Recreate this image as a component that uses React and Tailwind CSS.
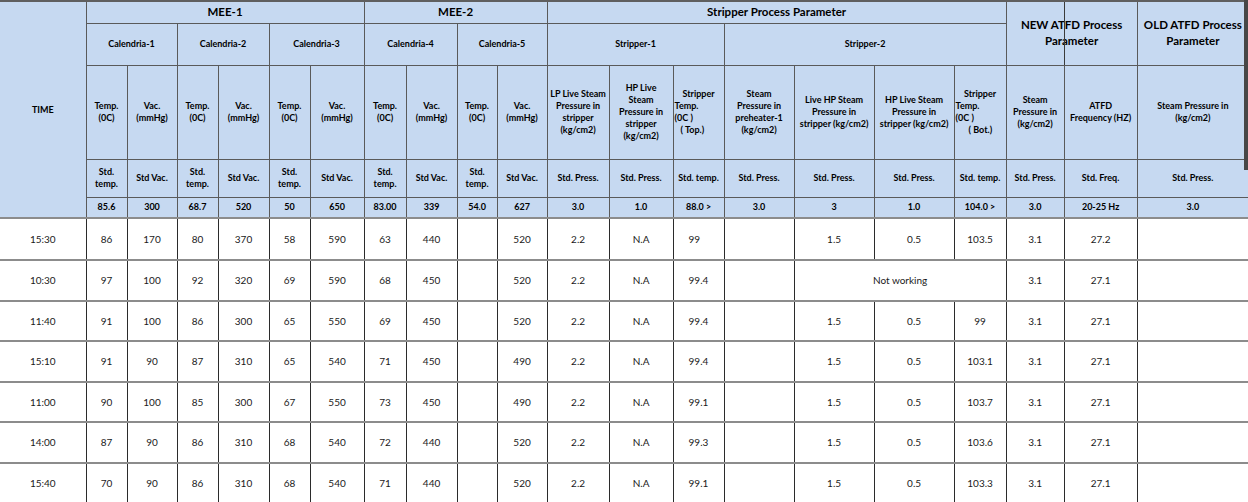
import React from "react";

const H = "bg-[#c6d9f1] border border-[#5a5a5a] text-center align-middle font-bold p-0 text-black";
const H1 = H + " text-[11.5px] leading-[16px] border-t-2 border-t-[#5f5f5f]";
const H2 = H + " text-[9px] leading-[12px]";
const D = "border-x border-x-[#2b2b2b] border-t-2 border-t-[#8c8c8c] text-center align-middle p-0 text-[10px] text-[#1a1a1a] font-normal";

const rows = [
  ["15:30", "86", "170", "80", "370", "58", "590", "63", "440", "", "520", "2.2", "N.A", "99", "", "1.5", "0.5", "103.5", "3.1", "27.2", ""],
  ["10:30", "97", "100", "92", "320", "69", "590", "68", "450", "", "520", "2.2", "N.A", "99.4", "", "NW", "3.1", "27.1", ""],
  ["11:40", "91", "100", "86", "300", "65", "550", "69", "450", "", "520", "2.2", "N.A", "99.4", "", "1.5", "0.5", "99", "3.1", "27.1", ""],
  ["15:10", "91", "90", "87", "310", "65", "540", "71", "450", "", "490", "2.2", "N.A", "99.4", "", "1.5", "0.5", "103.1", "3.1", "27.1", ""],
  ["11:00", "90", "100", "85", "300", "67", "550", "73", "450", "", "490", "2.2", "N.A", "99.1", "", "1.5", "0.5", "103.7", "3.1", "27.1", ""],
  ["14:00", "87", "90", "86", "310", "68", "540", "72", "440", "", "520", "2.2", "N.A", "99.3", "", "1.5", "0.5", "103.6", "3.1", "27.1", ""],
  ["15:40", "70", "90", "86", "310", "68", "540", "71", "440", "", "520", "2.2", "N.A", "99.1", "", "1.5", "0.5", "103.3", "3.1", "27.1", ""],
];

const rowH = ["h-[42px]", "h-[41px]", "h-[40px]", "h-[41px]", "h-[40px]", "h-[41px]", "h-[40px]"];

function TempHead({ label, pad }) {
  return (
    <div className="flex flex-col items-stretch">
      <div className="text-center">Stripper</div>
      <div className="text-left pl-[1px]">Temp.</div>
      <div className="text-left pl-[1px]">(0C )</div>
      <div className={"text-left " + pad}>({label})</div>
    </div>
  );
}

export default function App() {
  return (
    <div className="relative w-[1248px] h-[502px] overflow-hidden bg-white font-['Lato','Liberation_Sans',sans-serif]">
      <table className="w-[1248px] table-fixed border-collapse">
        <colgroup>
          <col className="w-[86px]" />
          <col className="w-[41px]" />
          <col className="w-[50px]" />
          <col className="w-[41px]" />
          <col className="w-[51px]" />
          <col className="w-[41px]" />
          <col className="w-[54px]" />
          <col className="w-[42px]" />
          <col className="w-[51px]" />
          <col className="w-[40px]" />
          <col className="w-[50px]" />
          <col className="w-[62px]" />
          <col className="w-[64px]" />
          <col className="w-[51px]" />
          <col className="w-[70px]" />
          <col className="w-[80px]" />
          <col className="w-[80px]" />
          <col className="w-[52px]" />
          <col className="w-[58px]" />
          <col className="w-[73px]" />
          <col className="w-[111px]" />
        </colgroup>
        <thead>
          <tr className="h-[22px]">
            <th rowSpan={5} className={H2 + " border-l-0 border-t-2 border-t-[#5f5f5f]"}>TIME</th>
            <th colSpan={6} className={H1}>MEE-1</th>
            <th colSpan={4} className={H1}>MEE-2</th>
            <th colSpan={7} className={H1}>Stripper Process Parameter</th>
            <th colSpan={2} rowSpan={2} className={H1 + " relative"}>
              <div>NEW ATFD Process</div>
              <div>Parameter</div>
              <div className="absolute left-[57px] top-0 bottom-0 w-[1px] bg-[#3a3a3a]" />
            </th>
            <th rowSpan={2} className={H1 + " border-r-0"}>
              <div>OLD ATFD Process</div>
              <div>Parameter</div>
            </th>
          </tr>
          <tr className="h-[42px]">
            <th colSpan={2} className={H2}>Calendria-1</th>
            <th colSpan={2} className={H2}>Calendria-2</th>
            <th colSpan={2} className={H2}>Calendria-3</th>
            <th colSpan={2} className={H2}>Calendria-4</th>
            <th colSpan={2} className={H2}>Calendria-5</th>
            <th colSpan={3} className={H2}>Stripper-1</th>
            <th colSpan={4} className={H2}>Stripper-2</th>
          </tr>
          <tr className="h-[94px]">
            <th className={H2}>Temp.<br />(0C)</th>
            <th className={H2}>Vac.<br />(mmHg)</th>
            <th className={H2}>Temp.<br />(0C)</th>
            <th className={H2}>Vac.<br />(mmHg)</th>
            <th className={H2}>Temp.<br />(0C)</th>
            <th className={H2}>Vac.<br />(mmHg)</th>
            <th className={H2}>Temp.<br />(0C)</th>
            <th className={H2}>Vac.<br />(mmHg)</th>
            <th className={H2}>Temp.<br />(0C)</th>
            <th className={H2}>Vac.<br />(mmHg)</th>
            <th className={H2}>LP Live Steam<br />Pressure in<br />stripper<br />(kg/cm2)</th>
            <th className={H2}>HP Live<br />Steam<br />Pressure in<br />stripper<br />(kg/cm2)</th>
            <th className={H2}><TempHead label=" Top." pad="pl-[7px] whitespace-pre" /></th>
            <th className={H2}>Steam<br />Pressure in<br />preheater-1<br />(kg/cm2)</th>
            <th className={H2}>Live HP Steam<br />Pressure in<br />stripper (kg/cm2)</th>
            <th className={H2}>HP Live Steam<br />Pressure in<br />stripper (kg/cm2)</th>
            <th className={H2}><TempHead label=" Bot." pad="pl-[14px] whitespace-pre" /></th>
            <th className={H2}>Steam<br />Pressure in<br />(kg/cm2)</th>
            <th className={H2}>ATFD<br />Frequency (HZ)</th>
            <th className={H2 + " border-r-0"}>Steam Pressure in<br />(kg/cm2)</th>
          </tr>
          <tr className="h-[38px]">
            <th className={H2}>Std.<br />temp.</th>
            <th className={H2}>Std Vac.</th>
            <th className={H2}>Std.<br />temp.</th>
            <th className={H2}>Std Vac.</th>
            <th className={H2}>Std.<br />temp.</th>
            <th className={H2}>Std Vac.</th>
            <th className={H2}>Std.<br />temp.</th>
            <th className={H2}>Std Vac.</th>
            <th className={H2}>Std.<br />temp.</th>
            <th className={H2}>Std Vac.</th>
            <th className={H2}>Std. Press.</th>
            <th className={H2}>Std. Press.</th>
            <th className={H2}>Std. temp.</th>
            <th className={H2}>Std. Press.</th>
            <th className={H2}>Std. Press.</th>
            <th className={H2}>Std. Press.</th>
            <th className={H2}>Std. temp.</th>
            <th className={H2}>Std. Press.</th>
            <th className={H2}>Std. Freq.</th>
            <th className={H2 + " border-r-0"}>Std. Press.</th>
          </tr>
          <tr className="h-[21px]">
            <th className={H2}>85.6</th>
            <th className={H2}>300</th>
            <th className={H2}>68.7</th>
            <th className={H2}>520</th>
            <th className={H2}>50</th>
            <th className={H2}>650</th>
            <th className={H2}>83.00</th>
            <th className={H2}>339</th>
            <th className={H2}>54.0</th>
            <th className={H2}>627</th>
            <th className={H2}>3.0</th>
            <th className={H2}>1.0</th>
            <th className={H2}>88.0 &gt;</th>
            <th className={H2}>3.0</th>
            <th className={H2}>3</th>
            <th className={H2}>1.0</th>
            <th className={H2}>104.0 &gt;</th>
            <th className={H2}>3.0</th>
            <th className={H2}>20-25 Hz</th>
            <th className={H2 + " border-r-0"}>3.0</th>
          </tr>
        </thead>
        <tbody>
          {rows.map((r, i) => (
            <tr key={i} className={rowH[i]}>
              {r.map((v, j) => {
                if (v === "NW") {
                  return (
                    <td key={j} colSpan={3} className={D}>Not working</td>
                  );
                }
                let cls = D;
                if (j === 0) cls += " border-l-0";
                if (j === r.length - 1) cls += " border-r-0";
                if (j === 13) cls = cls.replace("text-center", "text-left pl-[15px]");
                return (
                  <td key={j} className={cls}>{v}</td>
                );
              })}
            </tr>
          ))}
        </tbody>
      </table>
      <div className="absolute right-0 top-0 w-[4px] h-[170px] bg-[#474747]" />
    </div>
  );
}
